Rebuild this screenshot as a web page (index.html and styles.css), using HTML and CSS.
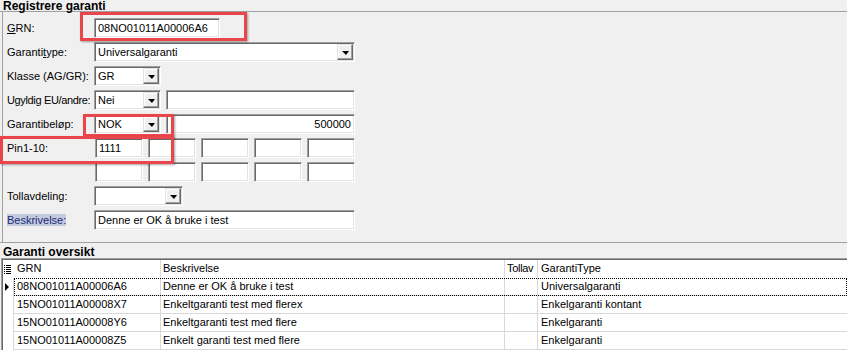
FILE: index.html
```html
<!DOCTYPE html>
<html>
<head>
<meta charset="utf-8">
<title>Registrere garanti</title>
<link rel="stylesheet" href="styles.css">
</head>
<body>
<section class="reg">
  <div class="title title-top">Registrere garanti</div>
  <div class="form">
    <div class="row">
      <span class="lbl"><u>G</u>RN:</span>
      <div class="ctrls"><div class="tb w-grn">08NO01011A00006A6</div></div>
    </div>
    <div class="row">
      <span class="lbl">Garanti<u>t</u>ype:</span>
      <div class="ctrls"><div class="cb w-type"><span class="val">Universalgaranti</span><span class="btn"></span></div></div>
    </div>
    <div class="row">
      <span class="lbl">Klasse (AG/GR):</span>
      <div class="ctrls"><div class="cb w-small"><span class="val">GR</span><span class="btn"></span></div></div>
    </div>
    <div class="row">
      <span class="lbl tight">Ugyldig EU/andre:</span>
      <div class="ctrls"><div class="cb w-small"><span class="val">Nei</span><span class="btn"></span></div><div class="tb w-rest"></div></div>
    </div>
    <div class="row">
      <span class="lbl">Garantibeløp:</span>
      <div class="ctrls"><div class="cb w-small"><span class="val">NOK</span><span class="btn"></span></div><div class="tb w-rest num">500000</div></div>
    </div>
    <div class="row">
      <span class="lbl">Pin1-10:</span>
      <div class="ctrls pins"><div class="tb w-pin">1111</div><div class="tb w-pin"></div><div class="tb w-pin"></div><div class="tb w-pin"></div><div class="tb w-pin"></div></div>
    </div>
    <div class="row">
      <span class="lbl"></span>
      <div class="ctrls pins"><div class="tb w-pin"></div><div class="tb w-pin"></div><div class="tb w-pin"></div><div class="tb w-pin"></div><div class="tb w-pin"></div></div>
    </div>
    <div class="row">
      <span class="lbl">Tollavdeling:</span>
      <div class="ctrls"><div class="cb w-toll"><span class="val"></span><span class="btn"></span></div></div>
    </div>
    <div class="row">
      <span class="lbl"><span class="hl">Beskrivelse:</span></span>
      <div class="ctrls"><div class="tb w-type">Denne er OK å bruke i test</div></div>
    </div>
  </div>
</section>

<section class="ovr">
  <div class="title title-bottom">Garanti oversikt</div>
  <div class="grid">
    <div class="grow ghead">
      <div class="rh"><svg width="7" height="9" viewBox="0 0 7 9"><g fill="#000"><rect x="0" y="0" width="1" height="1"/><rect x="2" y="0" width="5" height="1"/><rect x="0" y="2" width="1" height="1"/><rect x="2" y="2" width="5" height="1"/><rect x="0" y="4" width="1" height="1"/><rect x="2" y="4" width="5" height="1"/><rect x="0" y="6" width="1" height="1"/><rect x="2" y="6" width="5" height="1"/><rect x="0" y="8" width="1" height="1"/><rect x="2" y="8" width="5" height="1"/></g></svg></div>
      <div class="cells">
        <div class="c c1">GRN</div><div class="c c2">Beskrivelse</div><div class="c c3">Tollav</div><div class="c c4">GarantiType</div>
      </div>
    </div>
    <div class="grow">
      <div class="rh"><span class="cur"></span></div>
      <div class="cells focus">
        <div class="c c1">08NO01011A00006A6</div><div class="c c2">Denne er OK å bruke i test</div><div class="c c3"></div><div class="c c4">Universalgaranti</div>
      </div>
    </div>
    <div class="grow">
      <div class="rh"></div>
      <div class="cells">
        <div class="c c1">15NO01011A00008X7</div><div class="c c2">Enkeltgaranti test med flerex</div><div class="c c3"></div><div class="c c4">Enkelgaranti kontant</div>
      </div>
    </div>
    <div class="grow">
      <div class="rh"></div>
      <div class="cells">
        <div class="c c1">15NO01011A00008Y6</div><div class="c c2">Enkeltgaranti test med flere</div><div class="c c3"></div><div class="c c4">Enkelgaranti</div>
      </div>
    </div>
    <div class="grow">
      <div class="rh"></div>
      <div class="cells">
        <div class="c c1">15NO01011A00008Z5</div><div class="c c2">Enkelt garanti test med flere</div><div class="c c3"></div><div class="c c4">Enkelgaranti</div>
      </div>
    </div>
  </div>
</section>

<div class="mark m-grn"></div>
<div class="mark m-belop"></div>
<div class="mark m-pin"></div>
</body>
</html>
```

FILE: styles.css
```css
* { box-sizing: border-box; }
html, body { margin: 0; padding: 0; }
body {
  position: relative;
  width: 847px;
  height: 350px;
  overflow: hidden;
  background: #f0f0f0;
  font-family: "Liberation Sans", Arial, sans-serif;
  font-size: 11px;
  color: #000;
}

.title {
  font-weight: bold;
  font-size: 12px;
  padding-left: 3px;
  white-space: nowrap;
}
.title-top {
  height: 12px;
  line-height: 13px;
  border-bottom: 1px solid #a0a0a0;
}
.title-bottom {
  height: 16px;
  line-height: 19px;
  border-top: 1px solid #a0a0a0;
}

.form {
  margin-left: 2px;
  border-left: 1px solid #a0a0a0;
  height: 230px;
  padding: 6px 0 0 4px;
  display: flex;
  flex-direction: column;
  gap: 4px;
}
.row {
  display: grid;
  grid-template-columns: 87px auto;
  align-items: center;
  height: 20px;
}
.lbl { white-space: nowrap; }
.tight { letter-spacing: -0.35px; }
.lbl u { text-decoration-thickness: 1px; text-underline-offset: 1px; }
.hl { background: #c3cadb; color: #1c2a78; }
.ctrls { display: flex; gap: 5px; }
.pins { gap: 5px; padding-left: 1px; }

.tb, .cb {
  height: 20px;
  background: #fff;
  border: 1px solid;
  border-color: #a0a0a0 #fff #fff #a0a0a0;
  box-shadow: inset 1px 1px 0 #696969, inset -1px -1px 0 #e3e3e3;
  white-space: nowrap;
  overflow: hidden;
}
.tb { padding: 0 3px; line-height: 18px; }
.num { text-align: right; }
.cb { display: flex; padding: 1px; }
.cb .val { flex: 1; padding-left: 2px; line-height: 16px; }
.cb .btn {
  width: 16px;
  height: 16px;
  background: #f0f0f0;
  border: 1px solid;
  border-color: #e3e3e3 #696969 #696969 #e3e3e3;
  box-shadow: inset -1px -1px 0 #a0a0a0, inset 1px 1px 0 #fff;
  display: flex;
  align-items: center;
  justify-content: center;
}
.cb .btn::after {
  content: "";
  width: 0;
  height: 0;
  border-left: 4px solid transparent;
  border-right: 3px solid transparent;
  border-top: 4px solid #000;
  margin-top: 1px;
}

.w-grn { width: 126px; }
.w-type { width: 261px; }
.w-small { width: 67px; }
.w-rest { width: 189px; }
.w-pin { width: 48px; }
.w-toll { width: 89px; }

.grid {
  margin-left: 1px;
  border-top: 1px solid #a0a0a0;
  border-left: 1px solid #a0a0a0;
  box-shadow: inset 1px 1px 0 #696969;
  background: #fff;
  padding: 1px 0 0 1px;
}
.grow { display: flex; height: 18px; }
.rh {
  width: 11px;
  flex: none;
  border-right: 1px solid #d8d8d8;
  display: flex;
  align-items: center;
  padding-left: 1px;
}
.ghead .rh { border-right-color: #fff; }
.cur {
  width: 0;
  height: 0;
  border-top: 4px solid transparent;
  border-bottom: 4px solid transparent;
  border-left: 4px solid #000;
  margin-left: 1px;
}
.cells { display: flex; flex: 1; }
.c {
  height: 18px;
  line-height: 17px;
  padding-left: 3px;
  border-right: 1px solid #d8d8d8;
  border-bottom: 1px solid #d8d8d8;
  white-space: nowrap;
  overflow: hidden;
}
.ghead .c { border-bottom-color: #fff; }
.c1 { width: 147px; }
.c2 { width: 344px; padding-left: 2px; }
.c3 { width: 33px; padding-left: 2px; letter-spacing: -0.3px; }
.c4 { flex: 1; border-right: none; }
.focus { outline: 1px dotted #000; outline-offset: -1px; }

.mark {
  position: absolute;
  border: 3px solid #e8464b;
  box-shadow: 1px 1px 2px rgba(0, 0, 0, 0.35);
}
.m-grn { left: 80px; top: 12px; width: 167px; height: 29px; }
.m-belop { left: 83px; top: 114px; width: 91px; height: 23px; }
.m-pin { left: 0; top: 136px; width: 174px; height: 28px; }
```
